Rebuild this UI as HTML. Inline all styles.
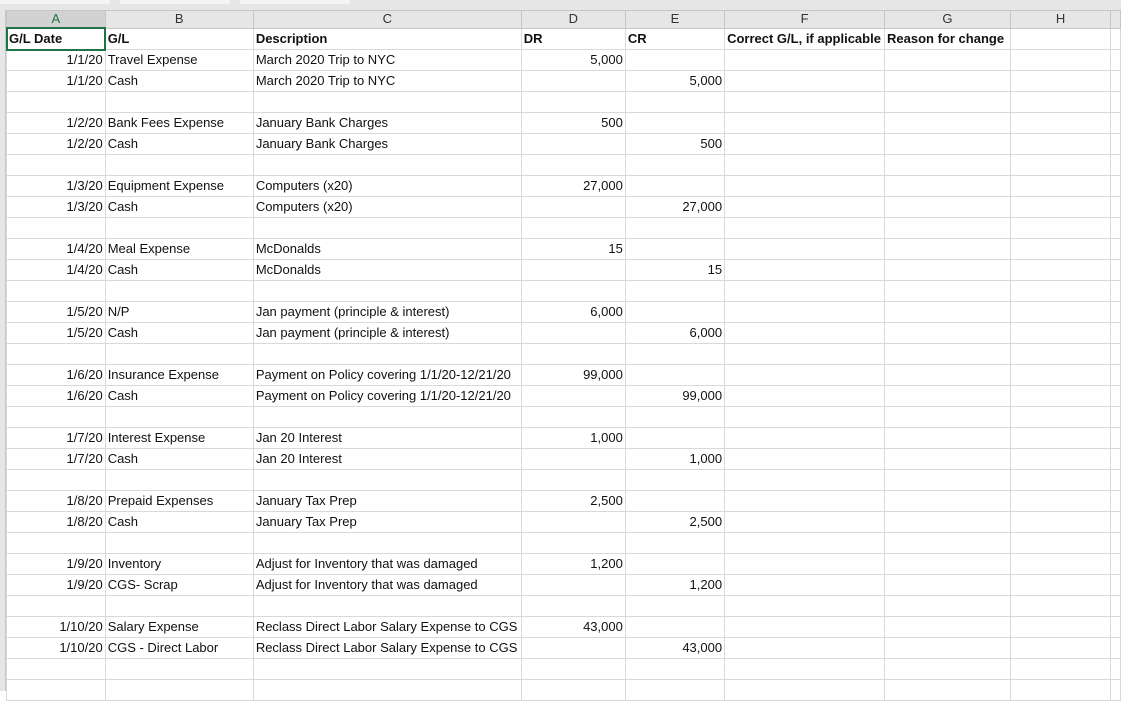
<!DOCTYPE html>
<html><head><style>
body{margin:0;width:1121px;height:691px;overflow:hidden;background:#fff;font-family:"Liberation Sans",Arial,sans-serif;position:relative}
.top{position:absolute;left:0;top:0;width:1121px;height:10px;background:#e6e6e6}
.top div{position:absolute;top:0;height:4px;background:#f3f3f3}
.rh{position:absolute;left:0;top:10px;width:5px;height:681px;background:#e6e6e6;border-right:1px solid #c6c6c6}
table{position:absolute;left:6px;top:10px;border-collapse:collapse;table-layout:fixed;font-size:13px}
td{height:20px;border:1px solid #d9d9d9;padding:0 2px;white-space:nowrap;overflow:visible;line-height:20px;color:#111}
tr.h td{height:16px;background:#e6e6e6;border-color:#c6c6c6;text-align:center;color:#333;font-size:13px;line-height:16px}
tr.h td.sel{background:#d2d2d2;color:#217346;border-bottom:2px solid #217346}
.r{text-align:right}
.b{font-weight:bold}
.a1{outline:2px solid #217346;outline-offset:-1px}
</style></head><body>
<div class="top"><div style="left:0;width:110px"></div><div style="left:120px;width:110px"></div><div style="left:240px;width:110px"></div></div>
<div class="rh"></div>
<table>
<colgroup><col style="width:100px"><col style="width:149px"><col style="width:268px"><col style="width:106px"><col style="width:101px"><col style="width:160px"><col style="width:126px"><col style="width:103px"><col style="width:10px"></colgroup>
<tr class="h"><td class="sel">A</td><td>B</td><td>C</td><td>D</td><td>E</td><td>F</td><td>G</td><td>H</td><td></td></tr>
<tr class="b"><td class="a1">G/L Date</td><td>G/L</td><td>Description</td><td>DR</td><td>CR</td><td>Correct G/L, if applicable</td><td>Reason for change</td><td></td><td></td></tr>
<tr><td class="r">1/1/20</td><td>Travel Expense</td><td>March 2020 Trip to NYC</td><td class="r">5,000</td><td></td><td></td><td></td><td></td><td></td></tr>
<tr><td class="r">1/1/20</td><td>Cash</td><td>March 2020 Trip to NYC</td><td></td><td class="r">5,000</td><td></td><td></td><td></td><td></td></tr>
<tr><td></td><td></td><td></td><td></td><td></td><td></td><td></td><td></td><td></td></tr>
<tr><td class="r">1/2/20</td><td>Bank Fees Expense</td><td>January Bank Charges</td><td class="r">500</td><td></td><td></td><td></td><td></td><td></td></tr>
<tr><td class="r">1/2/20</td><td>Cash</td><td>January Bank Charges</td><td></td><td class="r">500</td><td></td><td></td><td></td><td></td></tr>
<tr><td></td><td></td><td></td><td></td><td></td><td></td><td></td><td></td><td></td></tr>
<tr><td class="r">1/3/20</td><td>Equipment Expense</td><td>Computers (x20)</td><td class="r">27,000</td><td></td><td></td><td></td><td></td><td></td></tr>
<tr><td class="r">1/3/20</td><td>Cash</td><td>Computers (x20)</td><td></td><td class="r">27,000</td><td></td><td></td><td></td><td></td></tr>
<tr><td></td><td></td><td></td><td></td><td></td><td></td><td></td><td></td><td></td></tr>
<tr><td class="r">1/4/20</td><td>Meal Expense</td><td>McDonalds</td><td class="r">15</td><td></td><td></td><td></td><td></td><td></td></tr>
<tr><td class="r">1/4/20</td><td>Cash</td><td>McDonalds</td><td></td><td class="r">15</td><td></td><td></td><td></td><td></td></tr>
<tr><td></td><td></td><td></td><td></td><td></td><td></td><td></td><td></td><td></td></tr>
<tr><td class="r">1/5/20</td><td>N/P</td><td>Jan payment (principle &amp; interest)</td><td class="r">6,000</td><td></td><td></td><td></td><td></td><td></td></tr>
<tr><td class="r">1/5/20</td><td>Cash</td><td>Jan payment (principle &amp; interest)</td><td></td><td class="r">6,000</td><td></td><td></td><td></td><td></td></tr>
<tr><td></td><td></td><td></td><td></td><td></td><td></td><td></td><td></td><td></td></tr>
<tr><td class="r">1/6/20</td><td>Insurance Expense</td><td>Payment on Policy covering 1/1/20-12/21/20</td><td class="r">99,000</td><td></td><td></td><td></td><td></td><td></td></tr>
<tr><td class="r">1/6/20</td><td>Cash</td><td>Payment on Policy covering 1/1/20-12/21/20</td><td></td><td class="r">99,000</td><td></td><td></td><td></td><td></td></tr>
<tr><td></td><td></td><td></td><td></td><td></td><td></td><td></td><td></td><td></td></tr>
<tr><td class="r">1/7/20</td><td>Interest Expense</td><td>Jan 20 Interest</td><td class="r">1,000</td><td></td><td></td><td></td><td></td><td></td></tr>
<tr><td class="r">1/7/20</td><td>Cash</td><td>Jan 20 Interest</td><td></td><td class="r">1,000</td><td></td><td></td><td></td><td></td></tr>
<tr><td></td><td></td><td></td><td></td><td></td><td></td><td></td><td></td><td></td></tr>
<tr><td class="r">1/8/20</td><td>Prepaid Expenses</td><td>January Tax Prep</td><td class="r">2,500</td><td></td><td></td><td></td><td></td><td></td></tr>
<tr><td class="r">1/8/20</td><td>Cash</td><td>January Tax Prep</td><td></td><td class="r">2,500</td><td></td><td></td><td></td><td></td></tr>
<tr><td></td><td></td><td></td><td></td><td></td><td></td><td></td><td></td><td></td></tr>
<tr><td class="r">1/9/20</td><td>Inventory</td><td>Adjust for Inventory that was damaged</td><td class="r">1,200</td><td></td><td></td><td></td><td></td><td></td></tr>
<tr><td class="r">1/9/20</td><td>CGS- Scrap</td><td>Adjust for Inventory that was damaged</td><td></td><td class="r">1,200</td><td></td><td></td><td></td><td></td></tr>
<tr><td></td><td></td><td></td><td></td><td></td><td></td><td></td><td></td><td></td></tr>
<tr><td class="r">1/10/20</td><td>Salary Expense</td><td>Reclass Direct Labor Salary Expense to CGS</td><td class="r">43,000</td><td></td><td></td><td></td><td></td><td></td></tr>
<tr><td class="r">1/10/20</td><td>CGS - Direct Labor</td><td>Reclass Direct Labor Salary Expense to CGS</td><td></td><td class="r">43,000</td><td></td><td></td><td></td><td></td></tr>
<tr><td></td><td></td><td></td><td></td><td></td><td></td><td></td><td></td><td></td></tr>
<tr><td></td><td></td><td></td><td></td><td></td><td></td><td></td><td></td><td></td></tr>
</table>
</body></html>
